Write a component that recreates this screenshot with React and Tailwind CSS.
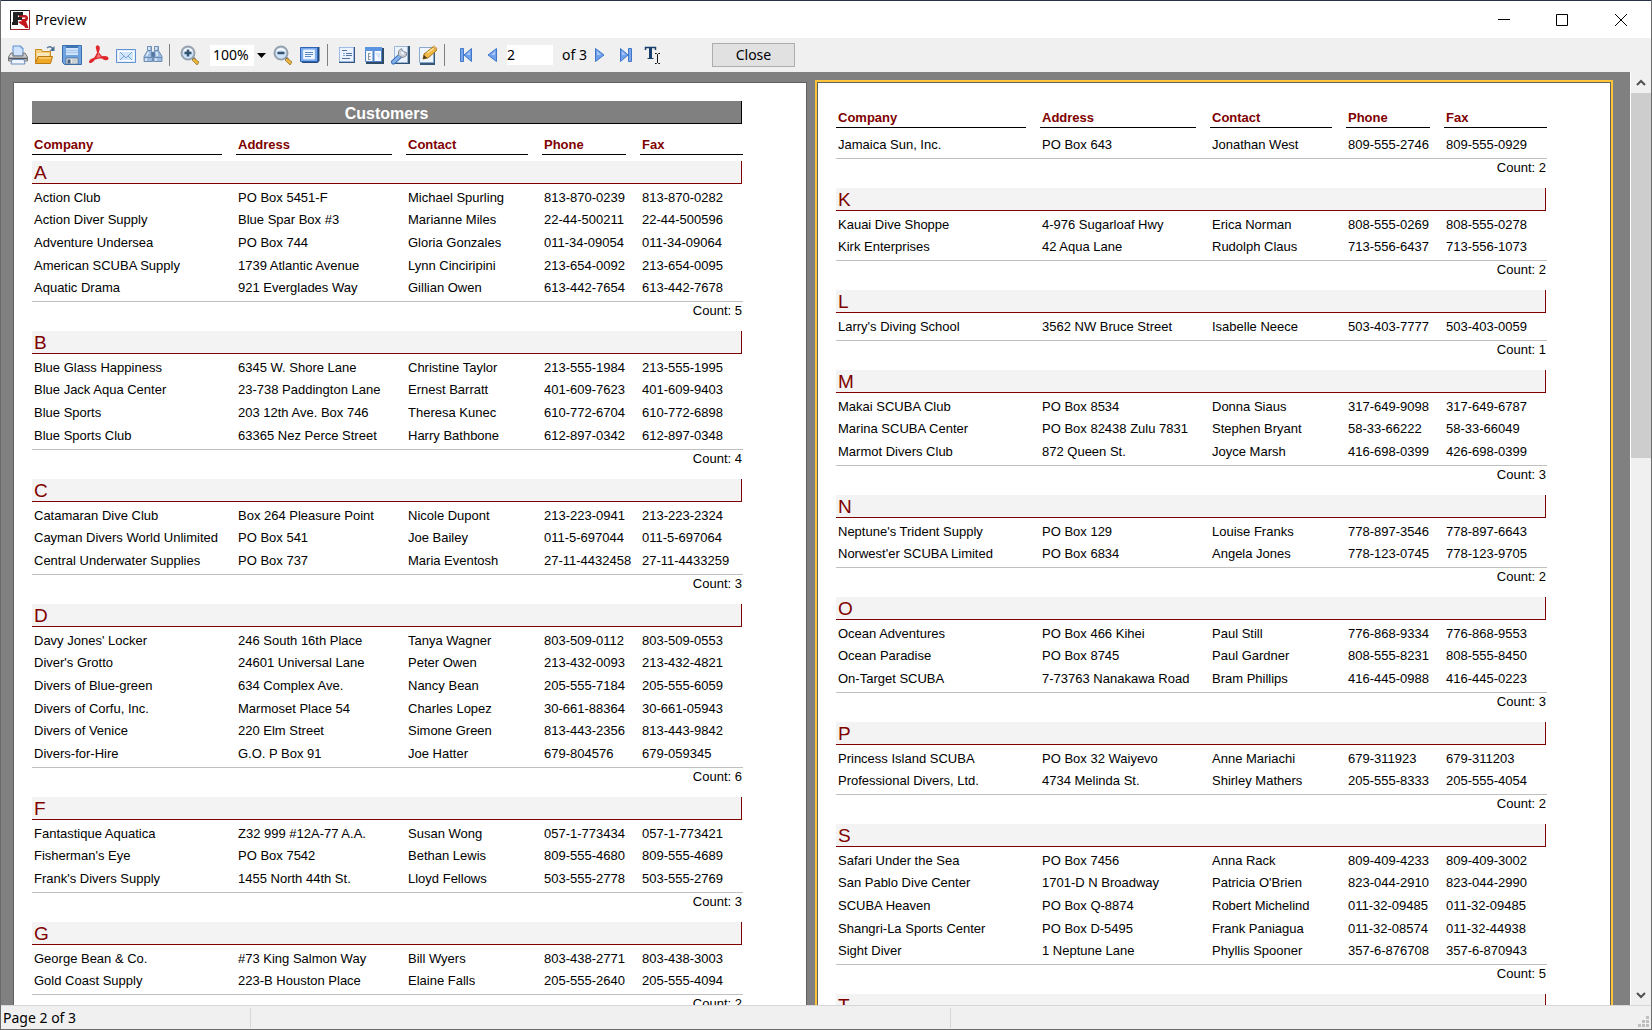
import { useState } from 'react'

const firstPage = [
  {
    letter: 'A',
    rows: [
      ['Action Club', 'PO Box 5451-F', 'Michael Spurling', '813-870-0239', '813-870-0282'],
      ['Action Diver Supply', 'Blue Spar Box #3', 'Marianne Miles', '22-44-500211', '22-44-500596'],
      ['Adventure Undersea', 'PO Box 744', 'Gloria Gonzales', '011-34-09054', '011-34-09064'],
      ['American SCUBA Supply', '1739 Atlantic Avenue', 'Lynn Cinciripini', '213-654-0092', '213-654-0095'],
      ['Aquatic Drama', '921 Everglades Way', 'Gillian Owen', '613-442-7654', '613-442-7678'],
    ],
  },
  {
    letter: 'B',
    rows: [
      ['Blue Glass Happiness', '6345 W. Shore Lane', 'Christine Taylor', '213-555-1984', '213-555-1995'],
      ['Blue Jack Aqua Center', '23-738 Paddington Lane', 'Ernest Barratt', '401-609-7623', '401-609-9403'],
      ['Blue Sports', '203 12th Ave. Box 746', 'Theresa Kunec', '610-772-6704', '610-772-6898'],
      ['Blue Sports Club', '63365 Nez Perce Street', 'Harry Bathbone', '612-897-0342', '612-897-0348'],
    ],
  },
  {
    letter: 'C',
    rows: [
      ['Catamaran Dive Club', 'Box 264 Pleasure Point', 'Nicole Dupont', '213-223-0941', '213-223-2324'],
      ['Cayman Divers World Unlimited', 'PO Box 541', 'Joe Bailey', '011-5-697044', '011-5-697064'],
      ['Central Underwater Supplies', 'PO Box 737', 'Maria Eventosh', '27-11-4432458', '27-11-4433259'],
    ],
  },
  {
    letter: 'D',
    rows: [
      ["Davy Jones' Locker", '246 South 16th Place', 'Tanya Wagner', '803-509-0112', '803-509-0553'],
      ["Diver's Grotto", '24601 Universal Lane', 'Peter Owen', '213-432-0093', '213-432-4821'],
      ['Divers of Blue-green', '634 Complex Ave.', 'Nancy Bean', '205-555-7184', '205-555-6059'],
      ['Divers of Corfu, Inc.', 'Marmoset Place 54', 'Charles Lopez', '30-661-88364', '30-661-05943'],
      ['Divers of Venice', '220 Elm Street', 'Simone Green', '813-443-2356', '813-443-9842'],
      ['Divers-for-Hire', 'G.O. P Box 91', 'Joe Hatter', '679-804576', '679-059345'],
    ],
  },
  {
    letter: 'F',
    rows: [
      ['Fantastique Aquatica', 'Z32 999 #12A-77 A.A.', 'Susan Wong', '057-1-773434', '057-1-773421'],
      ["Fisherman's Eye", 'PO Box 7542', 'Bethan Lewis', '809-555-4680', '809-555-4689'],
      ["Frank's Divers Supply", '1455 North 44th St.', 'Lloyd Fellows', '503-555-2778', '503-555-2769'],
    ],
  },
  {
    letter: 'G',
    rows: [
      ['George Bean & Co.', '#73 King Salmon Way', 'Bill Wyers', '803-438-2771', '803-438-3003'],
      ['Gold Coast Supply', '223-B Houston Place', 'Elaine Falls', '205-555-2640', '205-555-4094'],
    ],
  },
]

const secondPage = [
  {
    // continues group J, so it has no heading of its own
    letter: '',
    count: 2,
    rows: [['Jamaica Sun, Inc.', 'PO Box 643', 'Jonathan West', '809-555-2746', '809-555-0929']],
  },
  {
    letter: 'K',
    rows: [
      ['Kauai Dive Shoppe', '4-976 Sugarloaf Hwy', 'Erica Norman', '808-555-0269', '808-555-0278'],
      ['Kirk Enterprises', '42 Aqua Lane', 'Rudolph Claus', '713-556-6437', '713-556-1073'],
    ],
  },
  {
    letter: 'L',
    rows: [["Larry's Diving School", '3562 NW Bruce Street', 'Isabelle Neece', '503-403-7777', '503-403-0059']],
  },
  {
    letter: 'M',
    rows: [
      ['Makai SCUBA Club', 'PO Box 8534', 'Donna Siaus', '317-649-9098', '317-649-6787'],
      ['Marina SCUBA Center', 'PO Box 82438 Zulu 7831', 'Stephen Bryant', '58-33-66222', '58-33-66049'],
      ['Marmot Divers Club', '872 Queen St.', 'Joyce Marsh', '416-698-0399', '426-698-0399'],
    ],
  },
  {
    letter: 'N',
    rows: [
      ["Neptune's Trident Supply", 'PO Box 129', 'Louise Franks', '778-897-3546', '778-897-6643'],
      ["Norwest'er SCUBA Limited", 'PO Box 6834', 'Angela Jones', '778-123-0745', '778-123-9705'],
    ],
  },
  {
    letter: 'O',
    rows: [
      ['Ocean Adventures', 'PO Box 466 Kihei', 'Paul Still', '776-868-9334', '776-868-9553'],
      ['Ocean Paradise', 'PO Box 8745', 'Paul Gardner', '808-555-8231', '808-555-8450'],
      ['On-Target SCUBA', '7-73763 Nanakawa Road', 'Bram Phillips', '416-445-0988', '416-445-0223'],
    ],
  },
  {
    letter: 'P',
    rows: [
      ['Princess Island SCUBA', 'PO Box 32 Waiyevo', 'Anne Mariachi', '679-311923', '679-311203'],
      ['Professional Divers, Ltd.', '4734 Melinda St.', 'Shirley Mathers', '205-555-8333', '205-555-4054'],
    ],
  },
  {
    letter: 'S',
    rows: [
      ['Safari Under the Sea', 'PO Box 7456', 'Anna Rack', '809-409-4233', '809-409-3002'],
      ['San Pablo Dive Center', '1701-D N Broadway', "Patricia O'Brien", '823-044-2910', '823-044-2990'],
      ['SCUBA Heaven', 'PO Box Q-8874', 'Robert Michelind', '011-32-09485', '011-32-09485'],
      ['Shangri-La Sports Center', 'PO Box D-5495', 'Frank Paniagua', '011-32-08574', '011-32-44938'],
      ['Sight Diver', '1 Neptune Lane', 'Phyllis Spooner', '357-6-876708', '357-6-870943'],
    ],
  },
  { letter: 'T', rows: [] },
]

function Logo() {
  return (
    <svg className="h-5 w-5" viewBox="0 0 20 20" aria-hidden>
      <path d="M.5.5h19v19H.5z" fill="#fff" stroke="#9b1c22" />
      <path d="M.5 19.5v-19h19" fill="none" stroke="#1c1c1c" />
      <path d="M9 5h6q3 0 3 3.500 0 2-2 3l1.500 3.500 1 3h-3l-4-5V9h2.500q1.500 0 1.500-1.500H9z" fill="#c4161c" />
      <path d="M3 2h10v3.500H8V7h4v3H8v5H2v-3h1z" fill="#222" />
      <path d="M8 12l3-1 4 5-3-1z" fill="#c4161c" />
    </svg>
  )
}

function Printer() {
  return (
    <svg className="h-5 w-5" viewBox="0 0 20 20" aria-hidden>
      <path d="M5 1h8l2 2v8H5z" fill="#cfe4fc" stroke="#5b8fd0" />
      <path d="M13 1v2h2" fill="#fff" stroke="#5b8fd0" />
      <path d="M3 8h2v3h10V8h2l2.500 4v4h-19v-4z" fill="#c6c7ca" stroke="#77787c" />
      <path d="M1 13.500h18" stroke="#55575c" strokeWidth="1.500" />
      <path d="M4 14.500h12l1 4.500H3z" fill="#eef5ff" stroke="#6f8fba" />
      <path d="M2 11h2" stroke="#fff" />
    </svg>
  )
}

function Folder() {
  return (
    <svg className="h-5 w-5" viewBox="0 0 20 20" aria-hidden>
      <path d="M.5 18V4.500h6l1 2h8V12" fill="#f6cf7b" stroke="#c98a20" />
      <path d="M2 9h12M2 11h12" stroke="#fff" />
      <path d="M.5 18.500l2.500-7h14.500l-2 7z" fill="#eea928" stroke="#bd7a10" />
      <path d="M4 13h12" stroke="#fde3a0" />
      <path d="M12 3q3-3 6 1" fill="none" stroke="#5b7998" strokeWidth="1.500" />
      <path d="M19.500 1v5h-5z" fill="#4a6f94" />
    </svg>
  )
}

function Floppy() {
  return (
    <svg className="h-5 w-5" viewBox="0 0 20 20" aria-hidden>
      <path d="M.5.5h19v19h-17l-2-2z" fill="#6ea3e0" stroke="#3b6eaf" />
      <path d="M4 1h12v9H4z" fill="#cfe3fa" />
      <path d="M4 1h12v2H4z" fill="#3e73b5" />
      <path d="M4 5.500h12M4 7.500h12" stroke="#a5c6ee" />
      <path d="M4 13h12v6H4z" fill="#e9ecef" stroke="#46627f" strokeWidth=".7" />
      <path d="M5.500 14.500h3v4h-3z" fill="#44607c" />
      <path d="M10 15h5M10 17h5" stroke="#aeb6bd" />
    </svg>
  )
}

function Pdf() {
  return (
    <svg className="h-5 w-5" viewBox="0 0 20 20" fill="none" stroke="#e0262b" strokeLinejoin="round" aria-hidden>
      <path d="M8.500 5C6 0 11 0 9.500 5c-.5 4-3 8-6 11-4 3-3-1 1-2 4-1.500 8-2 11-2 5 0 3 4-1 1.500C11 11 8.500 8 8.500 5z" strokeWidth="2" />
      <path d="M9 7v3l-2 3 5-1z" fill="#f27275" stroke="none" />
    </svg>
  )
}

function Mail() {
  return (
    <svg className="h-5 w-5" viewBox="0 0 20 20" aria-hidden>
      <path d="M.5 4.500h19v13H.5z" fill="#e1eeff" stroke="#5f92d2" />
      <path d="M2.500 6.500h15v9h-15z" fill="#d3e5fc" stroke="#fff" />
      <path d="M4 7l6 6 6-6M4 15l4-4M16 15l-4-4" fill="none" stroke="#76a4dc" />
    </svg>
  )
}

function Binoculars() {
  return (
    <svg className="h-5 w-5" viewBox="0 0 20 20" stroke="#5b7ca6" strokeWidth=".8" aria-hidden>
      <path d="M4.500 1.500h4v4l1 3v8h-8.500v-5l3.500-6z" fill="#9dbce0" />
      <path d="M11.500 1.500h4v4l3.500 6v5h-8.500v-8l1-3z" fill="#9dbce0" />
      <path d="M8.500 7.500h3v4h-3z" fill="#53759e" />
      <path d="M5 5.500h3M12 5.500h3M1 12.500h8M11 12.500h8" />
      <path d="M6 2v3M13 2v3M3.500 11l2-4M13.500 7l1 4M3 13v3M13 13v3" stroke="#e4f0fc" strokeWidth="1.500" />
    </svg>
  )
}

function Magnifier({ plus }) {
  return (
    <svg className="h-5 w-5" viewBox="0 0 20 20" aria-hidden>
      <path d="M12 12l3 3" stroke="#6d7278" strokeWidth="3" />
      <path d="M14 13l5 4-2 3-5-5z" fill="#e8b43c" stroke="#8c6a20" strokeWidth=".7" />
      <circle cx="8" cy="8" r="6.500" fill="#cfe3fa" stroke="#97a2af" strokeWidth="2" />
      <path d="M4 6q4-4 8 0" fill="none" stroke="#fff" strokeWidth="1.500" />
      <path d="M4.500 8h7" stroke="#34536f" strokeWidth="2.500" />
      {plus && <path d="M8 4.500v7" stroke="#34536f" strokeWidth="2.500" />}
    </svg>
  )
}

function FullScreen() {
  return (
    <svg className="h-5 w-5" viewBox="0 0 20 20" aria-hidden>
      <path d="M2 2h17.500v14l-2 2H2z" fill="#234879" />
      <path d="M.5 2.500h17v14H.5z" fill="#79a8ec" stroke="#2f65b5" />
      <path d="M3.500 5h11v9h-11z" fill="#eef6ff" stroke="#dcecff" />
      <path d="M5 7.500h8M5 9.500h8M5 11.500h6" stroke="#5887cb" />
    </svg>
  )
}

function Outline() {
  return (
    <svg className="h-5 w-5" viewBox="0 0 20 20" aria-hidden>
      <path d="M2 2h16v16H2z" fill="#35557c" />
      <path d="M2.500 2.500h14v14h-14z" fill="#eaf3ff" stroke="#9dbbe4" />
      <path d="M5 5.500h5M9 8.500h6M9 10.500h6M5 13.500h8" stroke="#53759c" />
      <path d="M6 8.500h2M6 10.500h2" stroke="#7da2d4" />
    </svg>
  )
}

function Thumbnails() {
  return (
    <svg className="h-5 w-5" viewBox="0 0 20 20" aria-hidden>
      <path d="M2 3h18v16H2z" fill="#2e4b67" />
      <path d="M1.500 2.500h16v14h-16z" fill="#f6faff" stroke="#5285c8" />
      <path d="M1 2h17v4H1z" fill="#5c94df" />
      <path d="M9.500 6v10" stroke="#4e83c8" strokeWidth="2" />
      <path d="M4.500 8v7M4.500 8.500h2M4.500 11.500h2M4.500 14.500h2" stroke="#8b949d" />
      <path d="M11 8h5v7z" fill="#d5e6fb" />
    </svg>
  )
}

function PageSetup() {
  return (
    <svg className="h-5 w-5" viewBox="0 0 20 20" aria-hidden>
      <path d="M4 1h15v18H4z" fill="#31526f" />
      <path d="M3.500 1.500h13v16h-13z" fill="#eaf3ff" stroke="#9db7d6" />
      <path d="M2.500 17l6.500-6" stroke="#3c6fb5" strokeWidth="5" strokeLinecap="round" />
      <path d="M2.500 17l6.500-6" stroke="#86b3ee" strokeWidth="3" strokeLinecap="round" />
      <path d="M7.500 10V6l3-2.500 1.500 3 3.500 1v3L12 12.500 9 11.500z" fill="#c9ced4" stroke="#858d96" />
      <circle cx="11.500" cy="8" r="1.500" fill="#eef5ff" />
    </svg>
  )
}

function EditPage() {
  return (
    <svg className="h-5 w-5" viewBox="0 0 20 20" aria-hidden>
      <path d="M2 3h15v17H2z" fill="#365878" />
      <path d="M1.500 2.500h14v15h-14z" fill="#eff6ff" stroke="#8aa9cc" />
      <path d="M5 14l1-5 9-7 4 3-9 8z" fill="#f0b844" stroke="#a57420" />
      <path d="M9 8l7-5" stroke="#fde29b" strokeWidth="1.500" />
      <path d="M5 14l1-4 3 3z" fill="#4b3620" />
      <path d="M15 1l4 3" stroke="#dcae63" strokeWidth="2" />
    </svg>
  )
}

function Arrow({ left, bar }) {
  return (
    <svg className={left ? 'h-5 w-5' : 'h-5 w-5 -scale-x-100'} viewBox="0 0 20 20" aria-hidden>
      {bar ? (
        <>
          <path d="M5.500 3.500h3v13h-3z" fill="#79a8ea" stroke="#3f76c9" />
          <path d="M16.500 3.500v13L9 10z" fill="#6fa1ea" stroke="#3f76c9" />
          <path d="M15 6v4h-3.500z" fill="#a9caf8" />
        </>
      ) : (
        <>
          <path d="M14.500 3.500v13L6 10z" fill="#6fa1ea" stroke="#3f76c9" />
          <path d="M13 6v4H9z" fill="#a9caf8" />
        </>
      )}
    </svg>
  )
}

function TextSelect() {
  return (
    <svg className="h-5 w-5" viewBox="0 0 20 20" fill="none" aria-hidden>
      <path d="M1.500 5V2.500h10V5" stroke="#183f6b" strokeWidth="1.500" />
      <path d="M6.500 2v11" stroke="#183f6b" strokeWidth="3" />
      <path d="M3.500 13.500h6" stroke="#183f6b" />
      <path d="M11 8.500h1.500l1 1 1-1H16M13.500 9.500v8M11 18.500h1.500l1-1 1 1H16" stroke="#111" />
    </svg>
  )
}

function ToolButton({ label, children }) {
  return (
    <button type="button" aria-label={label} title={label} className="flex h-5 w-5 shrink-0 items-center justify-center">
      {children}
    </button>
  )
}

function Separator() {
  return <div className="h-[22px] w-px shrink-0 bg-[#808080]" />
}

function TitleBar() {
  return (
    <header className="flex h-[38px] shrink-0 items-center border-t border-[#26324a] bg-white pl-[9px]">
      <Logo />
      <h1 className="ml-[5px] flex-1 font-['Open_Sans','Noto_Sans',sans-serif] text-sm text-black">Preview</h1>
      <button type="button" aria-label="Minimize" className="flex h-full w-[58px] items-center justify-center">
        <svg className="h-3 w-3" viewBox="0 0 12 12" stroke="#000" aria-hidden>
          <path d="M0 5.500h12" />
        </svg>
      </button>
      <button type="button" aria-label="Maximize" className="flex h-full w-[58px] items-center justify-center">
        <svg className="h-3 w-3" viewBox="0 0 12 12" fill="none" stroke="#000" aria-hidden>
          <path d="M.5.5h11v11H.5z" />
        </svg>
      </button>
      <button type="button" aria-label="Close window" className="flex h-full w-[60px] items-center justify-center">
        <svg className="h-3 w-3" viewBox="0 0 12 12" stroke="#000" aria-hidden>
          <path d="M0 0l12 12M12 0L0 12" />
        </svg>
      </button>
    </header>
  )
}

function Toolbar({ page, onPage, total }) {
  return (
    <div className="flex h-[34px] shrink-0 items-center bg-[#f0f0f0] pl-[7px] font-['Noto_Sans',sans-serif] text-sm text-black">
      <div className="flex gap-[7px]">
        <ToolButton label="Print"><Printer /></ToolButton>
        <ToolButton label="Open"><Folder /></ToolButton>
        <ToolButton label="Save"><Floppy /></ToolButton>
        <ToolButton label="Export to PDF"><Pdf /></ToolButton>
        <ToolButton label="Send by e-mail"><Mail /></ToolButton>
        <ToolButton label="Find"><Binoculars /></ToolButton>
      </div>
      <div className="ml-1.5"><Separator /></div>
      <div className="ml-2.5 flex items-center">
        <ToolButton label="Zoom in"><Magnifier plus /></ToolButton>
        <div className="relative ml-2.5 h-[21px] w-[58px]">
          <select
            aria-label="Zoom"
            defaultValue="100%"
            className="h-full w-full appearance-none bg-white pl-[3px] text-sm leading-5"
          >
            <option>50%</option>
            <option>100%</option>
            <option>200%</option>
          </select>
          <span className="pointer-events-none absolute inset-y-0 right-0 flex w-3.5 items-center justify-center bg-[#f0f0f0]">
            <svg className="h-[5px] w-[9px]" viewBox="0 0 9 5" aria-hidden>
              <path d="M0 0h9L4.500 5z" />
            </svg>
          </span>
        </div>
        <div className="ml-[5px] flex gap-[7px]">
          <ToolButton label="Zoom out"><Magnifier /></ToolButton>
          <ToolButton label="Full screen"><FullScreen /></ToolButton>
        </div>
      </div>
      <div className="ml-[7px]"><Separator /></div>
      <div className="ml-[9px] flex gap-[7px]">
        <ToolButton label="Outline"><Outline /></ToolButton>
        <ToolButton label="Thumbnails"><Thumbnails /></ToolButton>
        <ToolButton label="Page settings"><PageSetup /></ToolButton>
        <ToolButton label="Edit page"><EditPage /></ToolButton>
      </div>
      <div className="ml-1.5"><Separator /></div>
      <div className="ml-2.5 flex items-center gap-[7px]">
        <ToolButton label="First page"><Arrow left bar /></ToolButton>
        <ToolButton label="Previous page"><Arrow left /></ToolButton>
      </div>
      <input
        aria-label="Page number"
        value={page}
        onChange={(e) => onPage(e.target.value)}
        className="ml-[5px] h-5 w-[46px] bg-white outline-none"
      />
      <span className="ml-[9px] whitespace-nowrap">of {total}</span>
      <div className="ml-[3px] flex items-center gap-[7px]">
        <ToolButton label="Next page"><Arrow /></ToolButton>
        <ToolButton label="Last page"><Arrow bar /></ToolButton>
        <ToolButton label="Select text"><TextSelect /></ToolButton>
      </div>
      <button
        type="button"
        className="ml-12 flex h-6 w-[83px] items-center justify-center border border-[#adadad] bg-[#e1e1e1]"
      >
        Close
      </button>
    </div>
  )
}

function ColumnHead({ children, last }) {
  return (
    <th scope="col" className="p-0 text-left font-bold text-[#800000]">
      <span className={last ? 'block border-b border-black pb-px pl-[2px]' : 'mr-3.5 block border-b border-black pb-px pl-[2px]'}>
        {children}
      </span>
    </th>
  )
}

function Group({ group }) {
  const { letter, rows, count = rows.length } = group

  return (
    <>
      {letter && (
        <tbody>
          <tr>
            <th scope="rowgroup" colSpan={5} className="p-0 pb-[2px] text-left font-normal">
              <div className="mr-px h-[23px] border-r border-b border-[#800000] bg-[#f3f3f3] pl-[2px] text-[19px] leading-6 text-[#800000]">
                {letter}
              </div>
            </th>
          </tr>
        </tbody>
      )}
      <tbody>
        {rows.map((row) => (
          <tr key={row[0]} className="h-[23px] nth-[3n+2]:h-[22px]">
            {row.map((cell, i) => (
              <td key={i} className="p-0 pl-[2px] whitespace-nowrap">{cell}</td>
            ))}
          </tr>
        ))}
      </tbody>
      {rows.length > 0 && (
        <tbody>
          <tr>
            <td colSpan={5} className="h-8 p-0 pt-[2px] align-top">
              <div className="border-t border-[#c0c0c0] pr-px text-right leading-[18px]">Count: {count}</div>
            </td>
          </tr>
        </tbody>
      )}
    </>
  )
}

function CustomerTable({ groups }) {
  // the rows of a continued group sit closer to the column heads than a letter band does
  const continued = !groups[0].letter

  return (
    <table className="w-full table-fixed border-collapse text-[13px] leading-4 text-black">
      <colgroup>
        <col className="w-[204px]" />
        <col className="w-[170px]" />
        <col className="w-[136px]" />
        <col className="w-[98px]" />
        <col />
      </colgroup>
      <thead>
        <tr>
          <ColumnHead>Company</ColumnHead>
          <ColumnHead>Address</ColumnHead>
          <ColumnHead>Contact</ColumnHead>
          <ColumnHead>Phone</ColumnHead>
          <ColumnHead last>Fax</ColumnHead>
        </tr>
        <tr aria-hidden>
          <td colSpan={5} className={continued ? 'h-[5px] p-0' : 'h-1.5 p-0'} />
        </tr>
      </thead>
      {groups.map((group) => (
        <Group key={group.letter || 'continued'} group={group} />
      ))}
    </table>
  )
}

function Sheet({ active, children }) {
  return (
    <section
      className={
        active
          ? 'h-[1123px] w-[794px] shrink-0 border border-[#606060] bg-white pt-[27px] pr-[63px] pl-[18px] outline-2 outline-[#ffc438]'
          : 'h-[1123px] w-[794px] shrink-0 border border-[#606060] bg-white pt-[18px] pr-[63px] pl-[18px]'
      }
    >
      {children}
    </section>
  )
}

function ScrollBar() {
  return (
    <div className="flex w-[21px] shrink-0 flex-col border-l border-white bg-[#f0f0f0]">
      <button type="button" aria-label="Scroll up" className="flex h-[21px] shrink-0 items-center justify-center">
        <svg className="h-2.5 w-2.5" viewBox="0 0 10 10" fill="none" stroke="#505050" strokeWidth="2" aria-hidden>
          <path d="M1 7l4-4 4 4" />
        </svg>
      </button>
      <div className="min-h-0 flex-1">
        <div className="h-[41%] bg-[#cdcdcd]" />
      </div>
      <button type="button" aria-label="Scroll down" className="flex h-[21px] shrink-0 items-center justify-center">
        <svg className="h-2.5 w-2.5" viewBox="0 0 10 10" fill="none" stroke="#505050" strokeWidth="2" aria-hidden>
          <path d="M1 3l4 4 4-4" />
        </svg>
      </button>
    </div>
  )
}

function StatusBar({ page, total }) {
  return (
    <footer className="flex h-6 shrink-0 items-center border-t border-[#d7d7d7] bg-[#f0f0f0] font-['Noto_Sans',sans-serif] text-sm text-black">
      <div className="flex h-5 w-[250px] items-center border-r border-[#d7d7d7] pl-[2px]">
        Page {page} of {total}
      </div>
      <div className="h-5 w-[700px] border-r border-[#d7d7d7]" />
      <svg className="mr-0.5 mb-0.5 ml-auto h-[11px] w-[11px] self-end" viewBox="0 0 11 11" fill="#bfbfbf" aria-hidden>
        <path d="M8 0h3v3H8zM4 4h3v3H4zM8 4h3v3H8zM0 8h3v3H0zM4 8h3v3H4zM8 8h3v3H8z" />
      </svg>
    </footer>
  )
}

export default function App() {
  const [page, setPage] = useState('2')
  const total = 3

  return (
    <div className="flex h-screen flex-col overflow-hidden border-x border-b border-[#6b6b6b] bg-[#f0f0f0]">
      <TitleBar />
      <Toolbar page={page} onPage={setPage} total={total} />
      <div className="flex min-h-0 flex-1">
        <main className="flex min-w-0 flex-1 gap-2.5 overflow-hidden bg-[#808080] pt-2.5 pl-3 font-['Liberation_Sans',Arial,sans-serif]">
          <Sheet>
            <h2 className="mr-px mb-[13px] h-[23px] border-r border-b border-black bg-[#808080] pt-px text-center text-base leading-6 font-bold text-white">
              Customers
            </h2>
            <CustomerTable groups={firstPage} />
          </Sheet>
          <Sheet active>
            <CustomerTable groups={secondPage} />
          </Sheet>
        </main>
        <ScrollBar />
      </div>
      <StatusBar page={page} total={total} />
    </div>
  )
}
